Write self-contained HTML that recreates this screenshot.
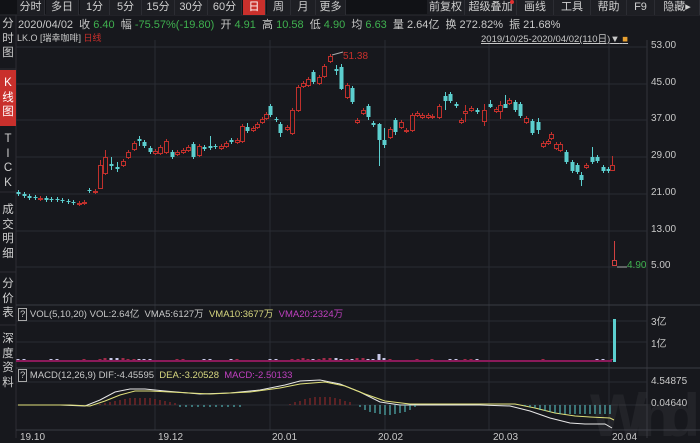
<!DOCTYPE html>
<html><head><meta charset="utf-8"><style>
*{margin:0;padding:0;box-sizing:border-box}
body{width:700px;height:438px;overflow:hidden;background:#17181d;font-family:"Liberation Sans","Noto Sans CJK SC",sans-serif;color:#c8c8c8;position:relative}
.t{position:absolute;font-size:11px;white-space:nowrap}
.tab{position:absolute;top:0;height:15px;font-size:11px;line-height:15px;text-align:center;background:#1e1f24;color:#cfcfcf;border-right:1px solid #2c2d33}
.side{position:absolute;left:0;width:16px;font-size:11.5px;line-height:14.5px;text-align:center;color:#cfcfcf}
</style></head><body>
<svg width="700" height="438" style="position:absolute;left:0;top:0">
<rect x="0" y="0" width="700" height="15" fill="#111216"/>
<line x1="0" y1="15" x2="700" y2="15" stroke="#2c2d33"/>
<line x1="16" y1="15" x2="16" y2="438" stroke="#2c2d33"/>
<line x1="647" y1="40" x2="647" y2="438" stroke="#33353c"/>
<g stroke="#2a2c33" stroke-width="1">
<line x1="16" y1="47" x2="647" y2="47"/><line x1="16" y1="84" x2="647" y2="84"/>
<line x1="16" y1="120" x2="647" y2="120"/><line x1="16" y1="157" x2="647" y2="157"/>
<line x1="16" y1="194" x2="647" y2="194"/><line x1="16" y1="231" x2="647" y2="231"/>
<line x1="16" y1="267" x2="647" y2="267"/>
<line x1="155" y1="40" x2="155" y2="430"/><line x1="270" y1="40" x2="270" y2="430"/>
<line x1="385" y1="40" x2="385" y2="430"/><line x1="489" y1="40" x2="489" y2="430"/>
<line x1="609" y1="40" x2="609" y2="430"/>
<line x1="16" y1="321" x2="647" y2="321"/><line x1="16" y1="342" x2="647" y2="342"/>
<line x1="16" y1="382" x2="647" y2="382"/><line x1="16" y1="405" x2="647" y2="405"/>
</g>
<g stroke="#3a3c44"><line x1="16" y1="305" x2="700" y2="305"/><line x1="16" y1="368" x2="700" y2="368"/><line x1="16" y1="430" x2="700" y2="430"/></g>
<line x1="0" y1="69" x2="16" y2="69" stroke="#2c2d33"/>
<rect x="0" y="70" width="16" height="56" fill="#c9302c"/>
<line x1="0" y1="192" x2="16" y2="192" stroke="#2c2d33"/>
<line x1="0" y1="272" x2="16" y2="272" stroke="#2c2d33"/>
<line x1="0" y1="325" x2="16" y2="325" stroke="#2c2d33"/>
<text x="590" y="436" font-family="Liberation Sans" font-size="60" font-weight="bold" fill="#4a4c52" opacity="0.22" textLength="110">Wind</text>
<g id="k"></g>
<g id="v"></g>
<line x1="16" y1="361" x2="612" y2="361" stroke="#8a1a5a" stroke-width="2"/>
<rect x="613" y="319" width="3" height="43" fill="#5ccfcf"/>
<polyline fill="none" stroke="#e8e8e8" stroke-width="1" points="18,405 60,405 85,406 100,400 115,392 130,389 145,389 165,391 200,394 230,393 260,390 285,385 300,381 320,380 340,384 360,392 380,402 400,405 440,405 480,405 510,406 530,411 550,418 570,423 585,424 605,424 612,428"/>
<polyline fill="none" stroke="#e0e07a" stroke-width="1" points="18,405 70,405 90,406 105,401 120,395 135,391 150,391 170,392 210,394 250,392 280,388 300,384 325,382 345,386 365,394 385,401 410,404 480,404 515,404 535,408 555,413 575,416 590,417 610,418 614,420"/>
<g id="h"></g>
<line x1="614.5" y1="241" x2="614.5" y2="266" stroke="#d04040"/>
<rect x="612.5" y="260.5" width="4" height="5" fill="#17181d" stroke="#d04040"/>
<line x1="617" y1="267" x2="627" y2="267" stroke="#aaa"/>
<line x1="343" y1="52" x2="332" y2="55" stroke="#aaa"/>
</svg>
<div class="tab" style="left:17px;width:28px">分时</div>
<div class="tab" style="left:46px;width:33px">多日</div>
<div class="tab" style="left:80px;width:30px">1分</div>
<div class="tab" style="left:110px;width:32px">5分</div>
<div class="tab" style="left:142px;width:33px">15分</div>
<div class="tab" style="left:175px;width:33px">30分</div>
<div class="tab" style="left:208px;width:34px">60分</div>
<div class="tab" style="left:243px;width:23px;background:#c9302c;color:#fff">日</div>
<div class="tab" style="left:267px;width:24px">周</div>
<div class="tab" style="left:291px;width:25px">月</div>
<div class="tab" style="left:316px;width:30px">更多</div>
<div class="tab" style="left:427px;width:38px">前复权</div>
<div class="tab" style="left:465px;width:52px">超级叠加<span style="position:absolute;right:2px;top:0;width:4px;height:4px;border-radius:2px;background:#e03030"></span></div>
<div class="tab" style="left:517px;width:37px">画线</div>
<div class="tab" style="left:554px;width:37px">工具</div>
<div class="tab" style="left:591px;width:36px">帮助</div>
<div class="tab" style="left:627px;width:28px">F9</div>
<div class="tab" style="left:655px;width:45px">隐藏▸</div>
<div class="side" style="top:17px">分<br>时<br>图</div>
<div class="side" style="top:76px;color:#fff">K<br>线<br>图</div>
<div class="side" style="top:132px">T<br>I<br>C<br>K</div>
<div class="side" style="top:203px">成<br>交<br>明<br>细</div>
<div class="side" style="top:277px">分<br>价<br>表</div>
<div class="side" style="top:332px">深<br>度<br>资<br>料</div>
<div class="t" style="left:18px;top:16px">2020/04/02 &nbsp;收 <span style="color:#3fb14f">6.40</span> &nbsp;幅 <span style="color:#3fb14f">-75.57%(-19.80)</span> &nbsp;开 <span style="color:#3fb14f">4.91</span> &nbsp;高 <span style="color:#3fb14f">10.58</span> &nbsp;低 <span style="color:#3fb14f">4.90</span> &nbsp;均 <span style="color:#3fb14f">6.63</span> &nbsp;量 2.64亿 &nbsp;换 272.82% &nbsp;振 21.68%</div>
<div class="t" style="left:17px;top:31px;font-size:9px">LK.O [瑞幸咖啡] <span style="color:#c9302c">日线</span></div>
<div class="t" style="left:481px;top:31px;font-size:9.5px;text-decoration:underline">2019/10/25-2020/04/02(110日)<span style="text-decoration:none">▼</span> <span style="color:#e8a030">■</span></div>
<div class="t" style="left:651px;top:40px;font-size:10px">53.00</div>
<div class="t" style="left:651px;top:77px;font-size:10px">45.00</div>
<div class="t" style="left:651px;top:113px;font-size:10px">37.00</div>
<div class="t" style="left:651px;top:150px;font-size:10px">29.00</div>
<div class="t" style="left:651px;top:187px;font-size:10px">21.00</div>
<div class="t" style="left:651px;top:224px;font-size:10px">13.00</div>
<div class="t" style="left:651px;top:260px;font-size:10px">5.00</div>
<div class="t" style="left:627px;top:260px;font-size:10px;color:#3fb14f">4.90</div>
<div class="t" style="left:343px;top:51px;font-size:10px;color:#c9302c">51.38</div>
<div class="t" style="left:18px;top:306px;font-size:9.5px"><span style="border:1px solid #aaa;padding:0 1px">?</span> VOL(5,10,20) VOL:2.64亿 &nbsp;VMA5:6127万 &nbsp;<span style="color:#d8d880">VMA10:3677万</span> &nbsp;<span style="color:#c040c0">VMA20:2324万</span></div>
<div class="t" style="left:651px;top:313px;font-size:10px">3亿</div>
<div class="t" style="left:651px;top:335px;font-size:10px">1亿</div>
<div class="t" style="left:18px;top:370px;font-size:9.5px"><span style="border:1px solid #aaa;padding:0 1px">?</span> MACD(12,26,9) DIF:-4.45595 &nbsp;<span style="color:#d8d880">DEA:-3.20528</span> &nbsp;<span style="color:#c040c0">MACD:-2.50133</span></div>
<div class="t" style="left:651px;top:376px;font-size:10px">4.54875</div>
<div class="t" style="left:651px;top:398px;font-size:10px">0.04640</div>
<div class="t" style="left:20px;top:432px;font-size:10px">19.10</div>
<div class="t" style="left:158px;top:432px;font-size:10px">19.12</div>
<div class="t" style="left:272px;top:432px;font-size:10px">20.01</div>
<div class="t" style="left:378px;top:432px;font-size:10px">20.02</div>
<div class="t" style="left:493px;top:432px;font-size:10px">20.03</div>
<div class="t" style="left:612px;top:432px;font-size:10px">20.04</div>
<script>
var R="#c0302c",C="#5ccfcf";
var d=[[18,192,194,0],[24,194,196,0],[29,196,198,0],[35,197,198,0],[40,198,199,1],[46,198,200,0],[51,199,200,0],[57,199,200,0],[62,200,201,0],[68,201,202,0],[73,202,203,0],[79,203,204,1],[84,202,203,1],
[89,190,191,0],[95,191,192,1],[100,165,188,1,160,188],[105,157,173,1,150,175],[111,164,166,0,157,170],[117,167,169,0,162,172],[123,161,165,1],[128,152,157,1],[134,143,149,1],[139,139,141,0,136,146],[144,142,146,0],[150,148,152,0],[155,151,153,1],[160,147,153,1],[166,141,152,1],[172,152,157,0],[177,152,154,1],[183,150,152,1],[188,147,150,1],[193,144,157,0],[199,146,155,1],[204,147,149,0],[210,146,148,0,136,150],[215,146,147,0],[221,146,148,1],[226,143,146,1],[231,140,142,0],[237,140,142,1],[242,126,141,1],[247,127,131,0,123,133],[253,128,130,1],[257,124,127,1],[262,119,122,1],[266,114,118,1],[270,106,115,0],[276,119,120,0],[280,124,133,0,122,137],[287,127,129,1],[292,110,133,1],[298,87,110,1],[303,83,86,1],[308,79,85,1],[313,72,82,0],[319,77,83,1],[324,66,76,1],[330,56,61,1],[336,69,71,0,65,75],[341,67,89,0,64,90],[347,85,97,1],[352,88,102,0],[357,120,122,1],[363,110,113,1],[368,106,117,0,104,120],[373,123,125,0],[379,124,140,0,123,166],[384,140,145,0,128,148],[390,129,137,1],[395,120,132,0,118,135],[401,122,127,1],[406,130,131,1],[412,115,130,1],[417,113,115,1],[422,115,117,1],[428,115,117,1],[432,116,117,1],[439,106,117,1],[445,96,101,0,92,110],[450,94,101,0],[456,104,106,0],[461,120,122,1],[465,111,113,1,105,122],[471,108,110,1],[477,110,112,0],[484,110,121,1,104,126],[490,104,107,0,100,108],[496,109,111,1],[500,105,111,1,101,119],[505,104,108,0,95,106],[509,100,103,1],[515,102,110,0],[520,104,116,0],[526,118,122,1],[532,121,133,0],[538,122,130,0,118,134],[543,143,146,1],[548,141,143,1],[551,134,138,1],[556,144,148,1],[560,144,150,1],[566,152,162,0],[572,162,171,0],[577,165,172,0],[581,175,180,0,172,186],[586,165,167,1],[592,157,162,0,147,164],[597,157,161,0],[603,167,171,0],[608,169,171,0],[612,165,170,1,156,170]];
var s="",v="";
d.forEach(function(a){var col=a[3]?R:C,x=a[0],t=a[1],b=a[2];if(b-t<1)b=t+1;
var wt=a[4]||t-2,wb=a[5]||b+2;
s+='<line x1="'+(x+.5)+'" y1="'+wt+'" x2="'+(x+.5)+'" y2="'+wb+'" stroke="'+col+'"/>';
if(a[3])s+='<rect x="'+(x-1.5)+'" y="'+(t+.5)+'" width="4" height="'+(b-t)+'" fill="#17181d" stroke="'+col+'"/>';
else s+='<rect x="'+(x-1.5)+'" y="'+t+'" width="4" height="'+(b-t)+'" fill="'+col+'"/>';
var hh=(x*7)%3==0?1:0;if(x>95&&x<140||x>290&&x<385)hh+=1;if(x>375&&x<382)hh=6;
if(hh>0)v+='<rect x="'+(x-1.5)+'" y="'+(360-hh)+'" width="3" height="'+hh+'" fill="'+(a[3]?"#a02a4a":"#c8c8e8")+'"/>';});
document.getElementById("k").innerHTML=s;document.getElementById("v").innerHTML=v;
var h="";
for(var x=100;x<180;x+=5){var y=405-Math.round(6*Math.sin((x-100)/80*Math.PI))-1;h+='<line x1="'+x+'" y1="'+y+'" x2="'+x+'" y2="405" stroke="#a02a2a"/>';}
for(var x=290;x<355;x+=5){var y=405-Math.round(7*Math.sin((x-290)/65*Math.PI))-1;h+='<line x1="'+x+'" y1="'+y+'" x2="'+x+'" y2="405" stroke="#a02a2a"/>';}
for(var x=180;x<245;x+=6){h+='<line x1="'+x+'" y1="405" x2="'+x+'" y2="407" stroke="#5ccfcf"/>';}
for(var x=355;x<420;x+=5){var y=405+Math.round(10*Math.sin((x-355)/65*Math.PI));h+='<line x1="'+x+'" y1="405" x2="'+x+'" y2="'+y+'" stroke="#5ccfcf"/>';}
for(var x=520;x<615;x+=5){var y=405+Math.round(9*Math.min(1,(x-520)/40));h+='<line x1="'+x+'" y1="405" x2="'+x+'" y2="'+y+'" stroke="#5ccfcf"/>';}
document.getElementById("h").innerHTML=h;
</script>
</body></html>
